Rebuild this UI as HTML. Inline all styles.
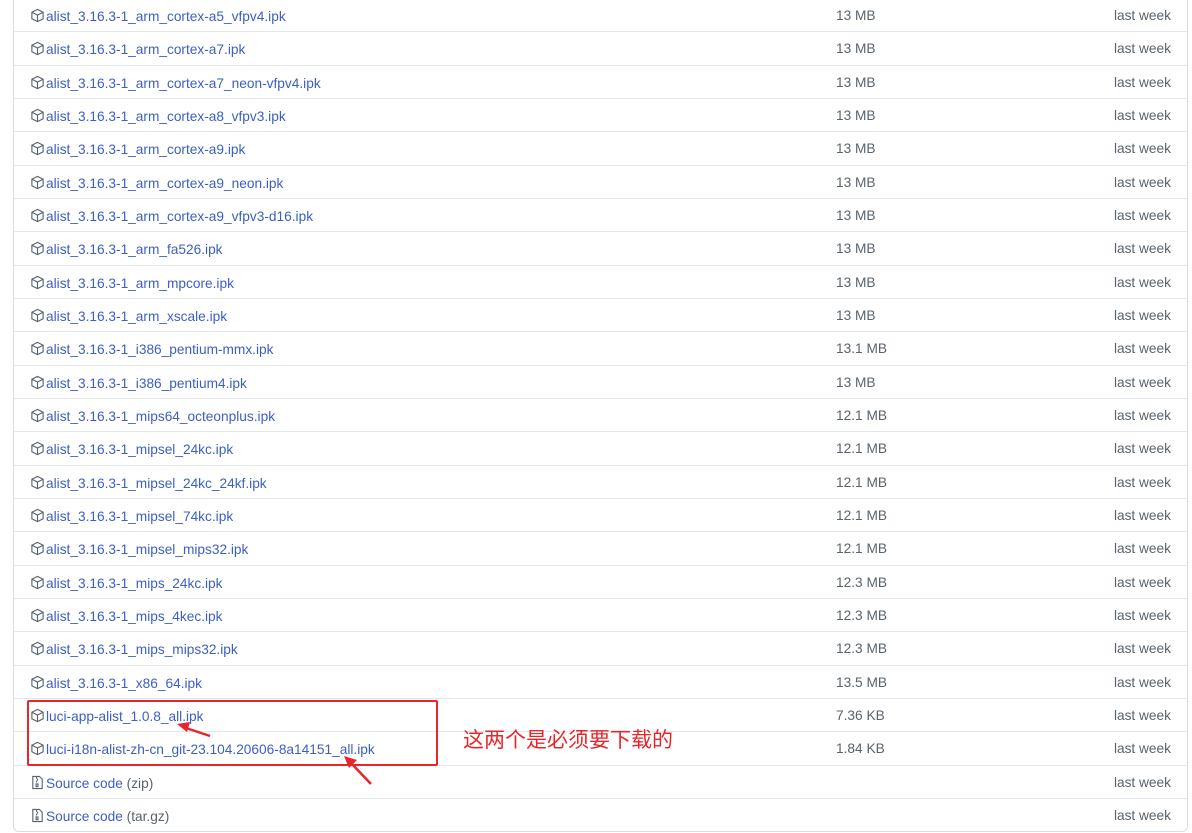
<!DOCTYPE html>
<html><head><meta charset="utf-8"><style>
body{margin:0;width:1192px;height:833px;background:#fff;overflow:hidden;font-family:"Liberation Sans","Noto Sans CJK SC",sans-serif;position:relative}
.box{position:absolute;left:13px;top:-10px;width:1173px;height:840px;border:1px solid #d8dee4;border-radius:0 0 6px 6px}
.row{position:absolute;left:14px;width:1173px;height:33px;border-top:1px solid #e3e7eb;font-size:13.7px}
.row .n{position:absolute;left:16px;top:9px;color:#3c5fc4;white-space:nowrap}
.row .n svg{vertical-align:-2px;margin-right:1px}
.row .s{position:absolute;left:822px;top:9px;color:#59636e}
.row .d{position:absolute;right:16px;top:9px;color:#59636e}
.g{color:#59636e}
</style></head><body>
<div class="box"></div>
<div id="rows"></div>
<div style="position:absolute;left:27px;top:700px;width:407px;height:62px;border:2px solid #e8262a;border-radius:2px"></div>
<div style="position:absolute;left:463px;top:724px;color:#e8262a;font-size:21px;font-family:'Noto Sans CJK SC',sans-serif">这两个是必须要下载的</div>
<svg style="position:absolute;left:0;top:0" width="1192" height="833">
<path d="M210 736 L186 728" stroke="#e8262a" stroke-width="2.5"/><path d="M177 724 L190 722 L187 732Z" fill="#e8262a"/>
<path d="M371 784 L352 764" stroke="#e8262a" stroke-width="2.5"/><path d="M344 756 L357 760 L349 768Z" fill="#e8262a"/>
</svg>
<script>
const d=[["alist_3.16.3-1_arm_cortex-a5_vfpv4.ipk","13 MB"],["alist_3.16.3-1_arm_cortex-a7.ipk","13 MB"],["alist_3.16.3-1_arm_cortex-a7_neon-vfpv4.ipk","13 MB"],["alist_3.16.3-1_arm_cortex-a8_vfpv3.ipk","13 MB"],["alist_3.16.3-1_arm_cortex-a9.ipk","13 MB"],["alist_3.16.3-1_arm_cortex-a9_neon.ipk","13 MB"],["alist_3.16.3-1_arm_cortex-a9_vfpv3-d16.ipk","13 MB"],["alist_3.16.3-1_arm_fa526.ipk","13 MB"],["alist_3.16.3-1_arm_mpcore.ipk","13 MB"],["alist_3.16.3-1_arm_xscale.ipk","13 MB"],["alist_3.16.3-1_i386_pentium-mmx.ipk","13.1 MB"],["alist_3.16.3-1_i386_pentium4.ipk","13 MB"],["alist_3.16.3-1_mips64_octeonplus.ipk","12.1 MB"],["alist_3.16.3-1_mipsel_24kc.ipk","12.1 MB"],["alist_3.16.3-1_mipsel_24kc_24kf.ipk","12.1 MB"],["alist_3.16.3-1_mipsel_74kc.ipk","12.1 MB"],["alist_3.16.3-1_mipsel_mips32.ipk","12.1 MB"],["alist_3.16.3-1_mips_24kc.ipk","12.3 MB"],["alist_3.16.3-1_mips_4kec.ipk","12.3 MB"],["alist_3.16.3-1_mips_mips32.ipk","12.3 MB"],["alist_3.16.3-1_x86_64.ipk","13.5 MB"],["luci-app-alist_1.0.8_all.ipk","7.36 KB"],["luci-i18n-alist-zh-cn_git-23.104.20606-8a14151_all.ipk","1.84 KB"],["Source code <span class=g>(zip)</span>",""],["Source code <span class=g>(tar.gz)</span>",""]];
const pkg='<svg width="15" height="15" viewBox="0 0 16 16" fill="none" stroke="#59636e" stroke-width="1.2"><path d="M8 1.5 14 4.5V11.5L8 14.5 2 11.5V4.5Z M2 4.5 8 7.5 14 4.5 M8 7.5V14.5"/></svg>';
const zip='<svg width="15" height="15" viewBox="0 0 16 16" fill="none" stroke="#59636e" stroke-width="1.2"><path d="M3 1.5H10L13 4.5V14.5H3Z M7 2v2 M8 4v2 M7 6v2 M6.5 9.5h2v3h-2z"/></svg>';
let h='';d.forEach((r,i)=>{h+=`<div class="row" style="top:${Math.round(-2+33.33*i)}px"><span class="n">${i<23?pkg:zip}${r[0]}</span><span class="s">${r[1]}</span><span class="d">last week</span></div>`});
document.getElementById('rows').innerHTML=h;
</script>
</body></html>
